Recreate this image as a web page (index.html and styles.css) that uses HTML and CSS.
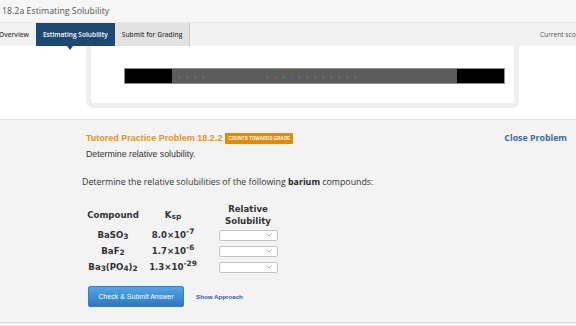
FILE: index.html
```html
<!DOCTYPE html>
<html lang="en">
<head>
    <meta charset="UTF-8">
    <meta name="viewport" content="width=device-width, initial-scale=1.0">
    <title>18.2a Estimating Solubility</title>
    <link rel="stylesheet" href="styles.css">
</head>
<body>
    <div class="title-bar">18.2a Estimating Solubility</div>

    <div class="tab-bar">
        <div class="tab">Overview</div>
        <div class="tab active">Estimating Solubility</div>
        <div class="tab plain">Submit for Grading</div>
        <div class="spacer"></div>
        <div class="score">Current score</div>
    </div>

    <div class="media-area">
        <div class="media-card">
            <div class="player">
                <div class="player-end"></div>
                <div class="player-controls">
                    <div class="ctrl-group">
                        <span class="dot"></span><span class="dot"></span><span class="dot"></span><span class="dot"></span>
                    </div>
                    <div class="ctrl-group">
                        <span class="dot"></span><span class="dot red"></span><span class="dot green"></span><span class="dot blue"></span>
                        <span class="dot"></span><span class="dot"></span><span class="dot"></span><span class="dot"></span>
                        <span class="dot"></span><span class="dot"></span><span class="dot"></span><span class="dot"></span>
                    </div>
                </div>
                <div class="player-end"></div>
            </div>
        </div>
    </div>

    <div class="problem">
        <div class="problem-head">
            <span class="problem-title">Tutored Practice Problem 18.2.2</span>
            <span class="badge">COUNTS TOWARDS GRADE</span>
            <span class="close-link">Close Problem</span>
        </div>
        <div class="problem-sub">Determine relative solubility.</div>

        <p class="question">Determine the relative solubilities of the following <b>barium</b> compounds:</p>

        <div class="answer-grid">
            <div class="cell head">Compound</div>
            <div class="cell head">K<sub>sp</sub></div>
            <div class="cell head">Relative<br>Solubility</div>

            <div class="cell">BaSO<sub>3</sub></div>
            <div class="cell">8.0×10<sup>-7</sup></div>
            <div class="cell"><div class="dropdown"><svg width="6" height="4" viewBox="0 0 6 4"><path d="M0.5 0.5 L3 3 L5.5 0.5" fill="none" stroke="#999" stroke-width="0.8"/></svg></div></div>

            <div class="cell">BaF<sub>2</sub></div>
            <div class="cell">1.7×10<sup>-6</sup></div>
            <div class="cell"><div class="dropdown"><svg width="6" height="4" viewBox="0 0 6 4"><path d="M0.5 0.5 L3 3 L5.5 0.5" fill="none" stroke="#999" stroke-width="0.8"/></svg></div></div>

            <div class="cell">Ba<sub>3</sub>(PO<sub>4</sub>)<sub>2</sub></div>
            <div class="cell">1.3×10<sup>-29</sup></div>
            <div class="cell"><div class="dropdown"><svg width="6" height="4" viewBox="0 0 6 4"><path d="M0.5 0.5 L3 3 L5.5 0.5" fill="none" stroke="#999" stroke-width="0.8"/></svg></div></div>
        </div>

        <div class="actions">
            <button class="submit-btn">Check &amp; Submit Answer</button>
            <span class="approach-link">Show Approach</span>
        </div>
    </div>
    <div class="page-foot"></div>
</body>
</html>
```

FILE: styles.css
```css
/* General Reset */
* {
    margin: 0;
    padding: 0;
    box-sizing: border-box;
}

body {
    width: 576px;
    height: 326px;
    overflow: hidden;
    background: #f5f5f5;
    font-family: "Open Sans", Arial, sans-serif;
    color: #333;
}

/* Header */
.title-bar {
    height: 22px;
    padding-left: 2px;
    line-height: 22px;
    font-size: 8.8px;
    color: #555;
    background: #f6f6f6;
}

.tab-bar {
    display: flex;
    height: 24px;
    margin-left: -8px;
    background: #f1f1f1;
    border-top: 1px solid #e9e9e9;
    font-size: 6.6px;
    font-weight: 600;
    white-space: nowrap;
}

.tab {
    position: relative;
    padding: 0 7px;
    line-height: 23px;
    color: #444;
}

.tab.active {
    background: #1d4872;
    color: #fff;
}

.tab.active::after {
    content: "";
    position: absolute;
    left: 31px;
    bottom: -4px;
    border-left: 3px solid transparent;
    border-right: 3px solid transparent;
    border-top: 4px solid #1d4872;
}

.tab.plain {
    background: #e2e2e2;
    border-right: 1px solid #c9c9c9;
}

.spacer {
    flex: 1;
}

.score {
    flex-shrink: 0;
    margin-right: -6px;
    line-height: 23px;
    font-weight: 400;
    color: #555;
}

/* Video area */
.media-area {
    background: #fff;
    padding-bottom: 11px;
    border-bottom: 1px solid #e2e2e2;
}

.media-card {
    margin: 0 57px 0 86px;
    padding: 22px 0 19px 33px;
    border: 5px solid #efefef;
    border-top: none;
    border-radius: 0 0 7px 7px;
}

.player {
    display: flex;
    width: 381px;
    height: 16px;
    border: 1px solid #8e8e8e;
    background: #5c5c5c;
}

.player-end {
    width: 47px;
    background: #000;
}

.player-controls {
    flex: 1;
    display: flex;
    align-items: center;
    justify-content: space-between;
    padding: 2px 100px 0 6px;
}

.ctrl-group {
    display: flex;
    gap: 5px;
}

.dot {
    width: 3px;
    height: 3px;
    border-radius: 50%;
    background: #6e6e6e;
}

.dot.red { background: #8a5a5a; }
.dot.green { background: #5d7d5d; }
.dot.blue { background: #5a5f92; }

/* Problem */
.problem {
    background: #f3f3f3;
    padding: 12px 9px 15px 86px;
    border-bottom: 1px solid #dedede;
}

.problem-head {
    display: flex;
    align-items: center;
    height: 12px;
}

.problem-title {
    font-family: "Liberation Sans", Arial, sans-serif;
    font-size: 9px;
    font-weight: 700;
    color: #e8941a;
}

.badge {
    margin-left: 3px;
    padding: 0 3px;
    height: 11px;
    line-height: 11px;
    border-radius: 1px;
    background: #e08a06;
    color: #fff;
    font-family: "Liberation Sans", Arial, sans-serif;
    font-size: 4.6px;
    font-weight: 700;
}

.close-link {
    margin-left: auto;
    font-size: 8.8px;
    font-weight: 700;
    color: #3d6aa2;
}

.problem-sub {
    margin-top: 4px;
    line-height: 12px;
    font-family: "Liberation Sans", Arial, sans-serif;
    font-size: 8.8px;
    color: #333;
}

.question {
    margin: 16px 0 0 -4px;
    line-height: 12px;
    font-size: 8.8px;
    color: #333;
}

.question b {
    color: #222;
}

.answer-grid {
    display: grid;
    grid-template-columns: 54px 66px 84px;
    grid-template-rows: 24px 16px 16px 16px;
    margin-top: 15px;
    font-family: "DejaVu Sans", Verdana, sans-serif;
    font-size: 8.6px;
    font-weight: 700;
    color: #333;
}

.cell {
    display: flex;
    align-items: center;
    justify-content: center;
    text-align: center;
    white-space: nowrap;
}

.cell.head {
    line-height: 12px;
}

.cell sub,
.cell sup {
    display: inline-block;
    font-size: 7.4px;
    line-height: 1;
}

.cell sub {
    transform: translateY(2px);
}

.cell sup {
    transform: translateY(-3px);
}

.dropdown {
    display: flex;
    align-items: center;
    justify-content: flex-end;
    width: 59px;
    height: 11px;
    padding-right: 5px;
    background: #fff;
    border: 1px solid #c3c3c3;
    border-radius: 2px;
}

.actions {
    display: flex;
    align-items: center;
    margin-top: 11px;
}

.submit-btn {
    width: 96px;
    height: 21px;
    margin-left: 2px;
    border: 1px solid #3a7cc0;
    border-radius: 2px;
    background: linear-gradient(#52a6e8, #2f77c0);
    color: #fff;
    font-family: "Liberation Sans", Arial, sans-serif;
    font-size: 7px;
}

.approach-link {
    margin-left: 12px;
    font-family: "Liberation Sans", Arial, sans-serif;
    font-size: 6.2px;
    font-weight: 700;
    color: #3c4f9e;
}

.page-foot {
    height: 10px;
    background: #f5f5f5;
}
```
